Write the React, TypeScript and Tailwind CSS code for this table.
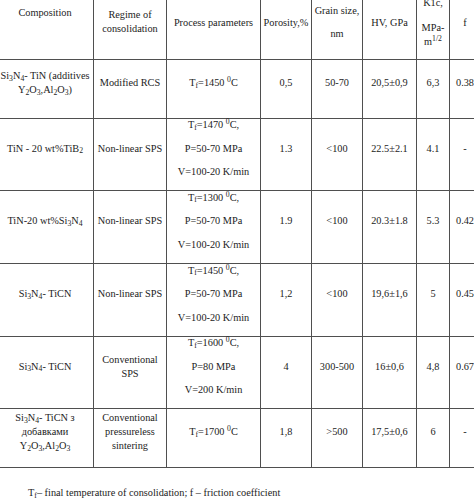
import type { ReactNode } from "react";
import clsx from "clsx";

type Row = {
  comp: ReactNode[];
  regime: string[];
  proc: ReactNode[];
  porosity: string;
  grain: string;
  hv: string;
  k1c: string;
  f: string;
};

const Tf = ({ t }: { t: string }) => (
  <>
    T<sub>f</sub>={t} <sup>0</sup>C
  </>
);

const SiN = () => (
  <>
    Si<sub>3</sub>N<sub>4</sub>
  </>
);

const YAl = () => (
  <>
    Y<sub>2</sub>O<sub>3</sub>,Al<sub>2</sub>O<sub>3</sub>
  </>
);

const rows: Row[] = [
  {
    comp: [
      <>
        <SiN />- TiN (additives
      </>,
      <>
        <YAl />)
      </>,
    ],
    regime: ["Modified RCS"],
    proc: [<Tf t="1450" />],
    porosity: "0,5",
    grain: "50-70",
    hv: "20,5±0,9",
    k1c: "6,3",
    f: "0.38",
  },
  {
    comp: [
      <>
        TiN - 20 wt%TiB<sub>2</sub>
      </>,
    ],
    regime: ["Non-linear SPS"],
    proc: [
      <>
        <Tf t="1470" />,
      </>,
      "P=50-70 MPa",
      "V=100-20 K/min",
    ],
    porosity: "1.3",
    grain: "<100",
    hv: "22.5±2.1",
    k1c: "4.1",
    f: "-",
  },
  {
    comp: [
      <>
        TiN-20 wt%
        <SiN />
      </>,
    ],
    regime: ["Non-linear SPS"],
    proc: [
      <>
        <Tf t="1300" />,
      </>,
      "P=50-70 MPa",
      "V=100-20 K/min",
    ],
    porosity: "1.9",
    grain: "<100",
    hv: "20.3±1.8",
    k1c: "5.3",
    f: "0.42",
  },
  {
    comp: [
      <>
        <SiN />- TiCN
      </>,
    ],
    regime: ["Non-linear SPS"],
    proc: [
      <>
        <Tf t="1450" />,
      </>,
      "P=50-70 MPa",
      "V=100-20 K/min",
    ],
    porosity: "1,2",
    grain: "<100",
    hv: "19,6±1,6",
    k1c: "5",
    f: "0.45",
  },
  {
    comp: [
      <>
        <SiN />- TiCN
      </>,
    ],
    regime: ["Conventional", "SPS"],
    proc: [
      <>
        <Tf t="1600" />,
      </>,
      "P=80 MPa",
      "V=200 K/min",
    ],
    porosity: "4",
    grain: "300-500",
    hv: "16±0,6",
    k1c: "4,8",
    f: "0.67",
  },
  {
    comp: [
      <>
        <SiN />- TiCN з
      </>,
      "добавками",
      <YAl />,
    ],
    regime: ["Conventional", "pressureless", "sintering"],
    proc: [<Tf t="1700" />],
    porosity: "1,8",
    grain: ">500",
    hv: "17,5±0,6",
    k1c: "6",
    f: "-",
  },
];

function Cell({ children, className }: { children: ReactNode; className?: string }) {
  return (
    <div
      className={clsx(
        "flex flex-col items-center text-center whitespace-nowrap border-r border-b border-[#4f4f4f]",
        className ?? "justify-center pb-[12px]"
      )}
    >
      {children}
    </div>
  );
}

export default function App() {
  return (
    <div
      className="w-[474px] h-[500px] overflow-hidden bg-white text-[#1c1c1c] text-[10.3px] leading-[14px]"
      style={{ fontFamily: '"Liberation Serif", "Noto Sans", serif' }}
    >
      <div className="-ml-[3px] w-[484px] grid grid-cols-[97px_73px_94px_51px_51px_54px_33px_31px] grid-rows-[60px_59px_72px_73px_73px_72px_59px]">
        <Cell className="justify-start pt-[6px]">Composition</Cell>
        <Cell className="justify-start pt-[8px]">
          <span>Regime of</span>
          <span>consolidation</span>
        </Cell>
        <Cell className="justify-center pb-[13px]">Process parameters</Cell>
        <Cell className="justify-center pb-[13px]">Porosity,%</Cell>
        <Cell className="justify-start pt-[4px] gap-[9px]">
          <span>Grain size,</span>
          <span>nm</span>
        </Cell>
        <Cell className="justify-center pb-[13px]">HV, GPa</Cell>
        <Cell className="justify-start">
          <span className="-mt-[4px]">K1c,</span>
          <span className="mt-[11px]">MPa-</span>
          <span>
            m<sup>1/2</sup>
          </span>
        </Cell>
        <Cell className="justify-center pb-[13px]">f</Cell>

        {rows.map((r, i) => (
          <div key={i} className="contents">
            <Cell>
              {r.comp.map((c, j) => (
                <span key={j}>{c}</span>
              ))}
            </Cell>
            <Cell>
              {r.regime.map((c, j) => (
                <span key={j}>{c}</span>
              ))}
            </Cell>
            <Cell className="justify-center pb-[12px] gap-[9.5px]">
              {r.proc.map((c, j) => (
                <span key={j}>{c}</span>
              ))}
            </Cell>
            <Cell>{r.porosity}</Cell>
            <Cell>{r.grain}</Cell>
            <Cell>{r.hv}</Cell>
            <Cell>{r.k1c}</Cell>
            <Cell>{r.f}</Cell>
          </div>
        ))}
      </div>
      <p className="mt-[18px] pl-[28px] whitespace-nowrap">
        T<sub>f</sub>– final temperature of consolidation; f – friction coefficient
      </p>
    </div>
  );
}
